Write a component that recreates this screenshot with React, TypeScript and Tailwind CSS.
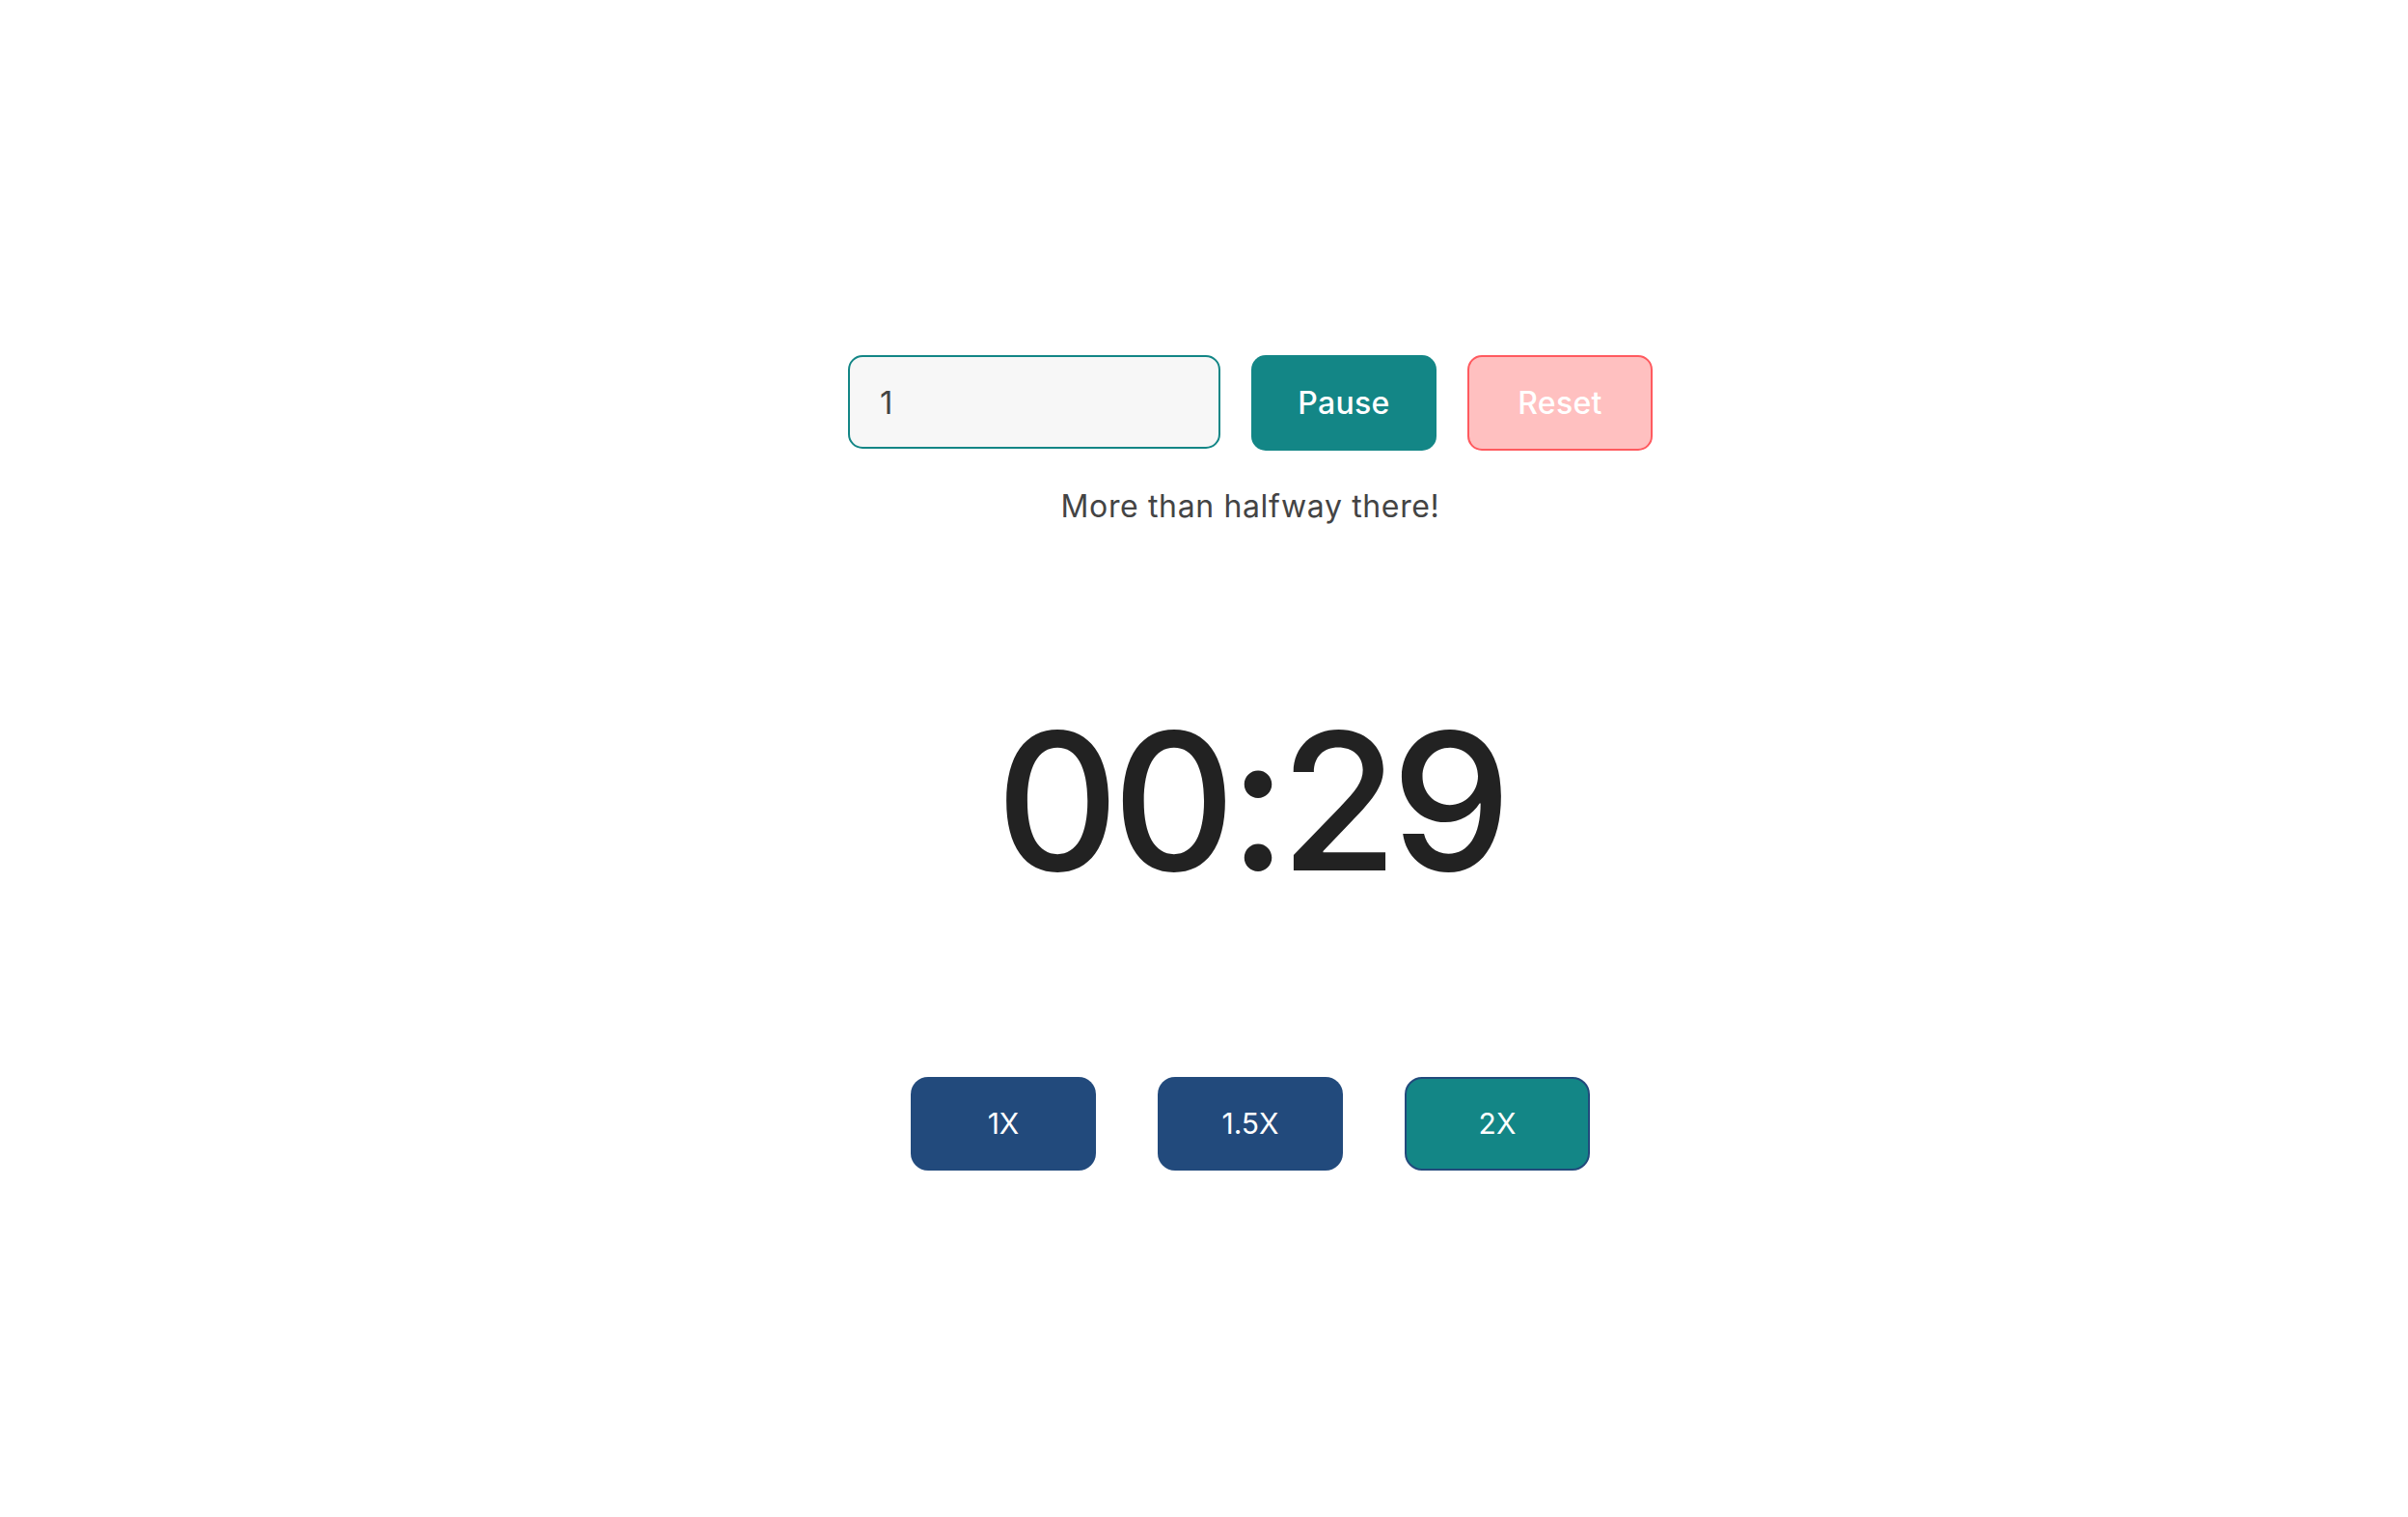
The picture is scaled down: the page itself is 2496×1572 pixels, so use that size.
import { useState } from "react";

const speeds = ["1X", "1.5X", "2X"];

export default function App() {
  const [minutes, setMinutes] = useState("1");
  const [speed, setSpeed] = useState("2X");

  return (
    <div className="min-h-screen bg-white pl-[96px] pt-[368px] font-['Inter',sans-serif] flex flex-col items-center">
      {/* Controls */}
      <div className="flex items-start gap-[32px]">
        <input
          value={minutes}
          onChange={(e) => setMinutes(e.target.value)}
          className="h-[97px] w-[386px] rounded-[15px] border-2 border-[#138686] bg-[#f7f7f7] px-[31px] text-[33px] text-[#444444] outline-none"
        />
        <button className="h-[99px] w-[192px] rounded-[15px] bg-[#138686] text-[32px] font-medium tracking-[0.01em] text-white">
          Pause
        </button>
        <button className="h-[99px] w-[192px] rounded-[15px] border-2 border-[#ff5a5f] bg-[#ffc0c0] text-[32px] font-medium tracking-[0.01em] text-white">
          Reset
        </button>
      </div>

      <p className="mt-[35px] text-[32px] leading-[46px] tracking-[0.02em] text-[#444444]">More than halfway there!</p>

      {/* Timer */}
      <div className="mt-[183px] text-[198px] leading-none font-medium tracking-[-0.035em] text-[#222222]">00:29</div>

      {/* Speed */}
      <div className="mt-[187px] flex gap-[64px]">
        {speeds.map((s) => (
          <button
            key={s}
            onClick={() => setSpeed(s)}
            className={`h-[97px] w-[192px] rounded-[18px] text-[30px] text-white ${
              speed === s ? "border-2 border-[#224a7c] bg-[#138686]" : "bg-[#224a7c]"
            }`}
          >
            {s}
          </button>
        ))}
      </div>
    </div>
  );
}
